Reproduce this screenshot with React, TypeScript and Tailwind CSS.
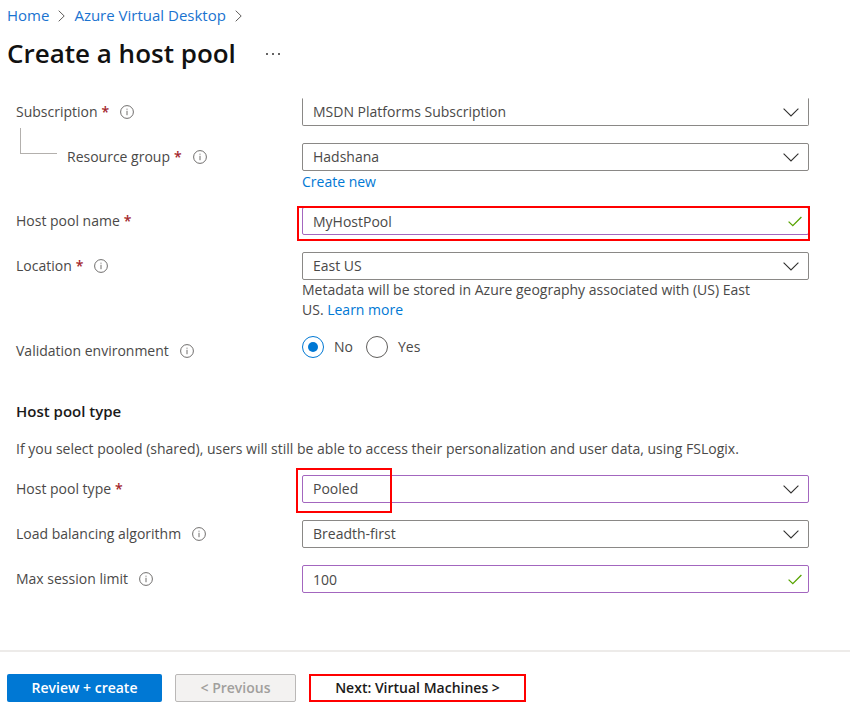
import { useState } from "react";
import type { ReactNode } from "react";

const control =
  "block h-7 w-full appearance-none rounded-xs border bg-white pl-[10px] pr-10 text-[#4a4948] outline-none";

function InfoIcon() {
  return (
    <svg viewBox="0 0 14 14" className="size-[14px] shrink-0" fill="none" stroke="#605e5c">
      <circle cx="7" cy="7" r="6.4" strokeWidth="0.9" />
      <path d="M7 5.8V10.2" strokeWidth="0.9" />
      <path d="M7 3.7V4.7" strokeWidth="0.9" />
    </svg>
  );
}

function Chevron() {
  return (
    <svg
      viewBox="0 0 16 9"
      className="pointer-events-none absolute right-[10px] bottom-[9px] h-[9px] w-4"
      fill="none"
      stroke="#323130"
      strokeWidth="1.1"
    >
      <path d="M0.6 0.6L8 8L15.4 0.6" />
    </svg>
  );
}

function Check() {
  return (
    <svg
      viewBox="0 0 14 11"
      className="pointer-events-none absolute right-[7px] bottom-2 h-[11px] w-[14px]"
      fill="none"
      stroke="#57a300"
      strokeWidth="1.3"
    >
      <path d="M0.6 5.6L4.8 9.6L13.4 1" />
    </svg>
  );
}

function CrumbArrow() {
  return (
    <svg viewBox="0 0 7 12" className="h-3 w-[7px]" fill="none" stroke="#605e5c">
      <path d="M0.7 0.7L6.2 6L0.7 11.3" />
    </svg>
  );
}

type FieldProps = {
  id: string;
  label: string;
  required?: boolean;
  info?: boolean;
  nested?: boolean;
  children: ReactNode;
};

function Field({ id, label, required, info, nested, children }: FieldProps) {
  return (
    <div className="grid grid-cols-[286px_1fr] items-start">
      <div className="flex h-7 items-center">
        {nested ? (
          <span className="mr-[10px] ml-1 h-[26px] w-[37px] -translate-y-4 border-b border-l border-[#b3b0ad]" />
        ) : null}
        <label htmlFor={id}>
          {label}
          {required ? <span className="ml-1 font-semibold text-[#a4262c]">*</span> : null}
        </label>
        {info ? (
          <span className="ml-[11px]">
            <InfoIcon />
          </span>
        ) : null}
      </div>
      <div>{children}</div>
    </div>
  );
}

type SelectProps = {
  id: string;
  options: string[];
  className: string;
};

function Select({ id, options, className }: SelectProps) {
  return (
    <div className="relative">
      <select id={id} className={`${control} ${className}`}>
        {options.map((option) => (
          <option key={option}>{option}</option>
        ))}
      </select>
      <Chevron />
    </div>
  );
}

export default function App() {
  const [name, setName] = useState("MyHostPool");
  const [limit, setLimit] = useState("100");
  const [validation, setValidation] = useState("No");

  return (
    <div className="bg-white font-['Open_Sans','Noto_Sans',sans-serif] text-sm text-[#4a4948]">
      <header className="px-[7px] pt-[6px]">
        <nav className="flex h-5 items-center gap-[9px] text-[15px] text-[#1a73d0]">
          <a href="#home">Home</a>
          <CrumbArrow />
          <a href="#avd">Azure Virtual Desktop</a>
          <CrumbArrow />
        </nav>
        <div className="mt-2 flex h-10 items-center gap-[30px]">
          <h1 className="text-[26px] font-semibold text-[#111]">Create a host pool</h1>
          <button type="button" aria-label="More" className="flex gap-1">
            <span className="size-[2px] rounded-full bg-[#323130]" />
            <span className="size-[2px] rounded-full bg-[#323130]" />
            <span className="size-[2px] rounded-full bg-[#323130]" />
          </button>
        </div>
      </header>

      <main className="pt-6 pr-[41px] pb-[57px] pl-4">
        <div className="space-y-[17px]">
          <Field id="subscription" label="Subscription" required info>
            <Select
              id="subscription"
              options={["MSDN Platforms Subscription"]}
              className="rounded-t-none border-[#8a8886] border-t-transparent"
            />
          </Field>
          <Field id="group" label="Resource group" required info nested>
            <Select id="group" options={["Hadshana"]} className="border-[#8a8886]" />
            <a href="#new" className="block h-[19px] w-fit leading-[22px] text-[#0078d4]">
              Create new
            </a>
          </Field>
          <Field id="name" label="Host pool name" required>
            <div className="relative">
              <input
                id="name"
                value={name}
                onChange={(e) => setName(e.target.value)}
                className={`${control} border-[#a366bf]`}
              />
              <Check />
              <div className="pointer-events-none absolute -top-px -right-px -bottom-[6px] -left-[5px] border-2 border-[#ff0000]" />
            </div>
          </Field>
          <Field id="location" label="Location" required info>
            <Select id="location" options={["East US"]} className="border-[#8a8886]" />
            <p className="max-w-[460px] leading-5">
              Metadata will be stored in Azure geography associated with (US) East US.{" "}
              <a href="#learn" className="text-[#0078d4]">
                Learn more
              </a>
            </p>
          </Field>
          <Field id="validation" label="Validation environment" info>
            <div className="flex h-5 gap-[13px]">
              {["No", "Yes"].map((value) => (
                <label key={value} className="flex items-center gap-[10px]">
                  <input
                    id={value === "No" ? "validation" : undefined}
                    type="radio"
                    name="validation"
                    checked={validation === value}
                    onChange={() => setValidation(value)}
                    className="grid size-[22px] appearance-none place-items-center rounded-full border border-[#605e5c] checked:border-[#0078d4] checked:before:size-[10px] checked:before:rounded-full checked:before:bg-[#0078d4]"
                  />
                  {value}
                </label>
              ))}
            </div>
          </Field>
        </div>

        <h2 className="mt-9 text-[15px] leading-5 font-semibold text-[#1b1a19]">
          Host pool type
        </h2>
        <p className="mt-[18px] mb-4 leading-5">
          If you select pooled (shared), users will still be able to access their personalization
          and user data, using FSLogix.
        </p>

        <div className="space-y-[17px]">
          <Field id="type" label="Host pool type" required>
            <div className="relative">
              <Select id="type" options={["Pooled", "Personal"]} className="border-[#a366bf]" />
              <div className="pointer-events-none absolute -top-[7px] -bottom-[10px] -left-[6px] w-24 border-2 border-[#ff0000]" />
            </div>
          </Field>
          <Field id="algorithm" label="Load balancing algorithm" info>
            <Select
              id="algorithm"
              options={["Breadth-first", "Depth-first"]}
              className="border-[#8a8886]"
            />
          </Field>
          <Field id="limit" label="Max session limit" info>
            <div className="relative">
              <input
                id="limit"
                value={limit}
                onChange={(e) => setLimit(e.target.value)}
                className={`${control} border-[#a366bf]`}
              />
              <Check />
            </div>
          </Field>
        </div>
      </main>

      <footer className="flex gap-[13px] border-t-2 border-[#edebe9] px-[7px] pt-[22px] pb-[7px] font-semibold">
        <button type="button" className="h-7 w-[155px] rounded-xs bg-[#0078d4] text-white">
          Review + create
        </button>
        <button
          type="button"
          disabled
          className="h-7 w-[121px] rounded-xs border border-[#bab8b7] bg-[#f3f2f1] text-[#a19f9d]"
        >
          &lt; Previous
        </button>
        <button type="button" className="h-7 w-[217px] border-2 border-[#ff0000] text-[#1b1a19]">
          Next: Virtual Machines &gt;
        </button>
      </footer>
    </div>
  );
}
